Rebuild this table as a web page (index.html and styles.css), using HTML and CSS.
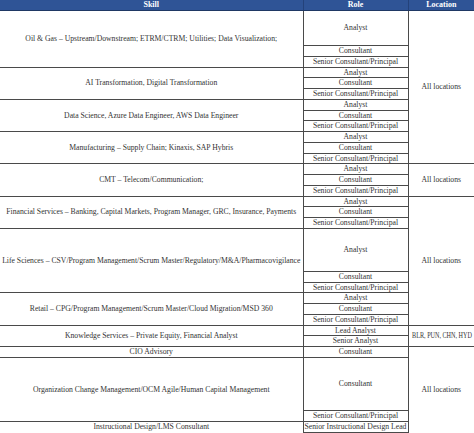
FILE: index.html
```html
<!DOCTYPE html>
<html>
<head>
<meta charset="utf-8">
<link rel="stylesheet" href="styles.css">
</head>
<body>
<table class="grid">
  <colgroup>
    <col class="c-skill">
    <col class="c-role">
    <col class="c-loc">
  </colgroup>
  <thead>
    <tr class="h-head"><th>Skill</th><th class="th-role">Role</th><th>Location</th></tr>
  </thead>
  <tbody>
    <tr class="h-oil"><td class="skill" rowspan="3">Oil &amp; Gas – Upstream/Downstream; ETRM/CTRM; Utilities; Data Visualization;</td><td class="role">Analyst</td><td class="loc" rowspan="12">All locations</td></tr>
    <tr class="h-std"><td class="role">Consultant</td></tr>
    <tr class="h-std"><td class="role">Senior Consultant/Principal</td></tr>

    <tr class="h-std"><td class="skill" rowspan="3">AI Transformation, Digital Transformation</td><td class="role">Analyst</td></tr>
    <tr class="h-std"><td class="role">Consultant</td></tr>
    <tr class="h-std"><td class="role">Senior Consultant/Principal</td></tr>

    <tr class="h-std"><td class="skill" rowspan="3">Data Science, Azure Data Engineer, AWS Data Engineer</td><td class="role">Analyst</td></tr>
    <tr class="h-std"><td class="role">Consultant</td></tr>
    <tr class="h-std"><td class="role">Senior Consultant/Principal</td></tr>

    <tr class="h-std"><td class="skill" rowspan="3">Manufacturing – Supply Chain; Kinaxis, SAP Hybris</td><td class="role">Analyst</td></tr>
    <tr class="h-std"><td class="role">Consultant</td></tr>
    <tr class="h-std"><td class="role">Senior Consultant/Principal</td></tr>

    <tr class="h-std"><td class="skill" rowspan="3">CMT – Telecom/Communication;</td><td class="role">Analyst</td><td class="loc" rowspan="3">All locations</td></tr>
    <tr class="h-std"><td class="role">Consultant</td></tr>
    <tr class="h-std"><td class="role">Senior Consultant/Principal</td></tr>

    <tr class="h-std"><td class="skill" rowspan="3">Financial Services – Banking, Capital Markets, Program Manager, GRC, Insurance, Payments</td><td class="role">Analyst</td><td class="loc" rowspan="9">All locations</td></tr>
    <tr class="h-std"><td class="role">Consultant</td></tr>
    <tr class="h-std"><td class="role">Senior Consultant/Principal</td></tr>

    <tr class="h-life"><td class="skill" rowspan="3">Life Sciences – CSV/Program Management/Scrum Master/Regulatory/M&amp;A/Pharmacovigilance</td><td class="role">Analyst</td></tr>
    <tr class="h-std"><td class="role">Consultant</td></tr>
    <tr class="h-std"><td class="role">Senior Consultant/Principal</td></tr>

    <tr class="h-std"><td class="skill" rowspan="3">Retail – CPG/Program Management/Scrum Master/Cloud Migration/MSD 360</td><td class="role">Analyst</td></tr>
    <tr class="h-std"><td class="role">Consultant</td></tr>
    <tr class="h-std"><td class="role">Senior Consultant/Principal</td></tr>

    <tr class="h-std"><td class="skill" rowspan="2">Knowledge Services – Private Equity, Financial Analyst</td><td class="role">Lead Analyst</td><td class="loc" rowspan="2"><span class="codes">BLR, PUN, CHN, HYD</span></td></tr>
    <tr class="h-std"><td class="role">Senior Analyst</td></tr>

    <tr class="h-std"><td class="skill">CIO Advisory</td><td class="role">Consultant</td><td class="loc last" rowspan="4">All locations</td></tr>

    <tr class="h-org"><td class="skill" rowspan="2">Organization Change Management/OCM Agile/Human Capital Management</td><td class="role">Consultant</td></tr>
    <tr class="h-std"><td class="role">Senior Consultant/Principal</td></tr>

    <tr class="h-std"><td class="skill last">Instructional Design/LMS Consultant</td><td class="role">Senior Instructional Design Lead</td></tr>
  </tbody>
</table>
</body>
</html>
```

FILE: styles.css
```css
html, body {
  margin: 0;
  padding: 0;
  background: #ffffff;
  overflow: hidden;
}

.grid {
  width: 474px;
  table-layout: fixed;
  border-collapse: collapse;
  border-spacing: 0;
  font-family: "Liberation Serif", "Times New Roman", serif;
  font-size: 7.7px;
  color: #333333;
}

.c-skill { width: 303px; }
.c-role { width: 105px; }
.c-loc { width: 66px; }

th, td {
  padding: 0;
  text-align: center;
  vertical-align: middle;
  white-space: nowrap;
  overflow: hidden;
  line-height: 1;
}

th {
  background: #2f5496;
  color: #ffffff;
  font-weight: bold;
  font-size: 8px;
  border-bottom: 1px solid #1f3864;
}

.th-role {
  border-left: 1px solid #24427a;
  border-right: 1px solid #24427a;
}

.h-head { height: 10px; }
.h-std { height: 10.75px; }
.h-oil { height: 35.5px; }
.h-life { height: 43px; }
.h-org { height: 53.5px; }

.skill {
  border-bottom: 1px solid #4a4a4a;
}

.role {
  border: 1px solid #4a4a4a;
}

.loc {
  border-bottom: 1px solid #4a4a4a;
}

.codes {
  display: inline-block;
  width: 80px;
  margin: 0 -7px;
  transform: scaleX(0.8);
  transform-origin: center;
}

.skill.last, .loc.last {
  border-bottom: none;
}
```
